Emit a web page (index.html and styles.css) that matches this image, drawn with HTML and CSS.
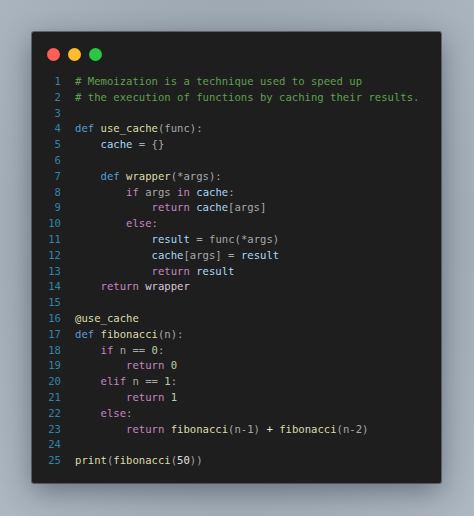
FILE: index.html
```html
<!DOCTYPE html>
<html>
<head>
<meta charset="utf-8">
<link rel="stylesheet" href="styles.css">
</head>
<body>
<div class="window">
  <div class="dots">
    <span class="dot red"></span>
    <span class="dot yellow"></span>
    <span class="dot green"></span>
  </div>
  <div class="code">
    <div class="ln">1</div><div class="src"><span class="c"># Memoization is a technique used to speed up</span></div>
    <div class="ln">2</div><div class="src"><span class="c"># the execution of functions by caching their results.</span></div>
    <div class="ln">3</div><div class="src"></div>
    <div class="ln">4</div><div class="src"><span class="k">def</span> <span class="f">use_cache</span><span class="p">(func):</span></div>
    <div class="ln">5</div><div class="src">    <span class="v">cache</span> <span class="p">=</span> <span class="p">{}</span></div>
    <div class="ln">6</div><div class="src"></div>
    <div class="ln">7</div><div class="src">    <span class="k">def</span> <span class="f">wrapper</span><span class="p">(*args):</span></div>
    <div class="ln">8</div><div class="src">        <span class="m">if</span> <span class="p">args</span> <span class="m">in</span> <span class="v">cache</span><span class="p">:</span></div>
    <div class="ln">9</div><div class="src">            <span class="m">return</span> <span class="v">cache</span><span class="p">[args]</span></div>
    <div class="ln">10</div><div class="src">        <span class="m">else</span><span class="p">:</span></div>
    <div class="ln">11</div><div class="src">            <span class="v">result</span> <span class="p">=</span> <span class="p">func(*args)</span></div>
    <div class="ln">12</div><div class="src">            <span class="v">cache</span><span class="p">[args]</span> <span class="p">=</span> <span class="v">result</span></div>
    <div class="ln">13</div><div class="src">            <span class="m">return</span> <span class="v">result</span></div>
    <div class="ln">14</div><div class="src">    <span class="m">return</span> <span class="w">wrapper</span></div>
    <div class="ln">15</div><div class="src"></div>
    <div class="ln">16</div><div class="src"><span class="f">@use_cache</span></div>
    <div class="ln">17</div><div class="src"><span class="k">def</span> <span class="f">fibonacci</span><span class="p">(n):</span></div>
    <div class="ln">18</div><div class="src">    <span class="m">if</span> <span class="p">n ==</span> <span class="n">0</span><span class="p">:</span></div>
    <div class="ln">19</div><div class="src">        <span class="m">return</span> <span class="n">0</span></div>
    <div class="ln">20</div><div class="src">    <span class="m">elif</span> <span class="p">n ==</span> <span class="n">1</span><span class="p">:</span></div>
    <div class="ln">21</div><div class="src">        <span class="m">return</span> <span class="n">1</span></div>
    <div class="ln">22</div><div class="src">    <span class="m">else</span><span class="p">:</span></div>
    <div class="ln">23</div><div class="src">        <span class="m">return</span> <span class="f">fibonacci</span><span class="p">(n-1)</span> <span class="t">+</span> <span class="f">fibonacci</span><span class="p">(n-2)</span></div>
    <div class="ln">24</div><div class="src"></div>
    <div class="ln">25</div><div class="src"><span class="f">print</span><span class="p">(</span><span class="f">fibonacci</span><span class="p">(</span><span class="t">50</span><span class="p">))</span></div>
  </div>
</div>
</body>
</html>
```
FILE: styles.css
```css
html, body {
  margin: 0;
  padding: 0;
}
body {
  width: 474px;
  height: 516px;
  overflow: hidden;
  background: radial-gradient(ellipse at 50% 45%, #8e99a5 0%, #9ea9b4 55%, #adb7c1 100%);
  padding-top: 32px;
  box-sizing: border-box;
}
.window {
  margin-left: 32px;
  width: 409px;
  height: 451px;
  box-sizing: border-box;
  background: #1e1e1e;
  border-radius: 2px;
  box-shadow: 0 8px 28px rgba(30, 40, 55, 0.45), 0 0 0 1px rgba(60, 60, 60, 0.6);
  padding: 16px 0 0 15px;
}
.dots {
  display: flex;
  gap: 8px;
  height: 13px;
}
.dot {
  width: 13px;
  height: 13px;
  border-radius: 50%;
  display: block;
}
.red { background: #ff5f57; }
.yellow { background: #febc2e; }
.green { background: #28c840; }
.code {
  margin-top: 13px;
  display: grid;
  grid-template-columns: 14px auto;
  column-gap: 14px;
  font-family: "DejaVu Sans Mono", "Liberation Mono", monospace;
  font-size: 10.6px;
  line-height: 15.8px;
  color: #b4b4b4;
}
.ln {
  text-align: right;
  color: #2e86a8;
  height: 15.8px;
}
.src {
  white-space: pre;
  height: 15.8px;
}
.c { color: #60a050; }
.k { color: #569cd6; }
.f { color: #dcdcaa; }
.v { color: #a8d8f8; }
.m { color: #c586c0; }
.n { color: #b5cea8; }
.p { color: #a8a8a8; }
.w { color: #d6c8dc; }
.t { color: #e0e0e0; }
```
